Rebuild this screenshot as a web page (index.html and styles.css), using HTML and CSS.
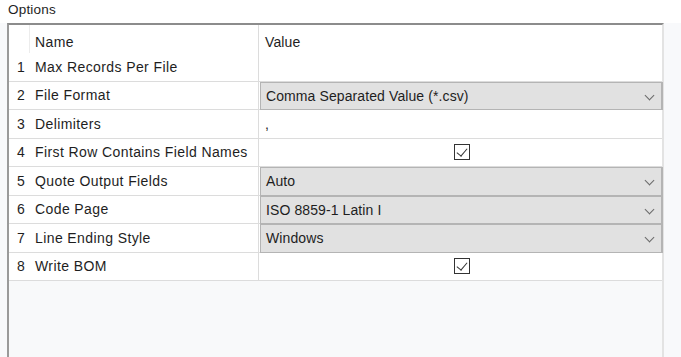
FILE: index.html
```html
<!DOCTYPE html>
<html lang="en">
<head>
    <meta charset="UTF-8">
    <title>Options</title>
    <link rel="stylesheet" href="styles.css">
</head>
<body>

<div class="panel">
    <div class="title">Options</div>
    <div class="frame">
        <div class="grid">
            <div class="cell num head"></div>
            <div class="cell name head">Name</div>
            <div class="cell value head">Value</div>

            <div class="cell num">1</div>
            <div class="cell name">Max Records Per File</div>
            <div class="cell value"></div>

            <div class="cell num">2</div>
            <div class="cell name">File Format</div>
            <div class="cell value"><div class="combo">Comma Separated Value (*.csv)<span class="chev"></span></div></div>

            <div class="cell num">3</div>
            <div class="cell name">Delimiters</div>
            <div class="cell value">,</div>

            <div class="cell num">4</div>
            <div class="cell name">First Row Contains Field Names</div>
            <div class="cell value center"><span class="check"></span></div>

            <div class="cell num">5</div>
            <div class="cell name">Quote Output Fields</div>
            <div class="cell value"><div class="combo">Auto<span class="chev"></span></div></div>

            <div class="cell num">6</div>
            <div class="cell name">Code Page</div>
            <div class="cell value"><div class="combo">ISO 8859-1 Latin I<span class="chev"></span></div></div>

            <div class="cell num">7</div>
            <div class="cell name">Line Ending Style</div>
            <div class="cell value"><div class="combo">Windows<span class="chev"></span></div></div>

            <div class="cell num">8</div>
            <div class="cell name">Write BOM</div>
            <div class="cell value center"><span class="check"></span></div>
        </div>
        <div class="empty"></div>
    </div>
</div>

</body>
</html>
```

FILE: styles.css
```css
body {
    margin: 0;
    background-color: #fff;
    font-family: "Liberation Sans", Arial, sans-serif;
    font-size: 14px;
    color: #1e1e1e;
}

.panel {
    height: 357px;
    display: flex;
    flex-direction: column;
    background: linear-gradient(to bottom, #fff 23px, #f8f9fb 23px);
}

.title {
    height: 23px;
    padding-left: 8px;
    font-size: 13.5px;
    letter-spacing: 0.2px;
    line-height: 20px;
    background-color: #fff;
}

.frame {
    flex: 1;
    width: 653px;
    margin-left: 7px;
    border-top: 2px solid #8c8c8c;
    border-left: 2px solid #9a9a9a;
    border-right: 2px solid #e3e3e3;
    background-color: #f8f9fa;
    display: flex;
    flex-direction: column;
}

.grid {
    display: grid;
    grid-template-columns: 21px 229px 1fr;
    grid-template-rows: 28px repeat(8, 28.5px);
    background-color: #fff;
}

.cell {
    display: flex;
    align-items: center;
    border-bottom: 1px solid #dcdcdc;
    box-sizing: border-box;
    white-space: nowrap;
}

.cell.head {
    border-bottom: none;
    align-items: flex-start;
    padding-top: 9px;
}

.num {
    justify-content: center;
    padding-left: 3px;
}

.num.head {
    border-right: 1px solid #ececec;
}

.name {
    padding-left: 5px;
    letter-spacing: 0.4px;
    border-right: 1px solid #dcdcdc;
}

.value {
    padding-left: 6px;
    letter-spacing: 0.1px;
}

.value.center {
    justify-content: center;
    padding-left: 0;
}

.combo {
    flex: 1;
    align-self: stretch;
    margin-left: -5px;
    margin-right: -1px;
    margin-bottom: -1px;
    padding-left: 5px;
    display: flex;
    align-items: center;
    background-color: #e1e1e1;
    border: 1px solid #b4b4b4;
    border-right-width: 2px;
    position: relative;
}

.chev {
    position: absolute;
    right: 8px;
    top: 9px;
    width: 6px;
    height: 6px;
    border-right: 1px solid #6a6a6a;
    border-bottom: 1px solid #6a6a6a;
    transform: rotate(45deg);
}

.check {
    width: 16px;
    height: 16px;
    border: 1px solid #333;
    box-sizing: border-box;
    position: relative;
    margin-left: 2px;
}

.check::after {
    content: "";
    position: absolute;
    left: 4px;
    top: 1px;
    width: 5px;
    height: 9px;
    border-right: 1px solid #333;
    border-bottom: 1px solid #333;
    transform: rotate(40deg);
}

.empty {
    flex: 1;
}
```
